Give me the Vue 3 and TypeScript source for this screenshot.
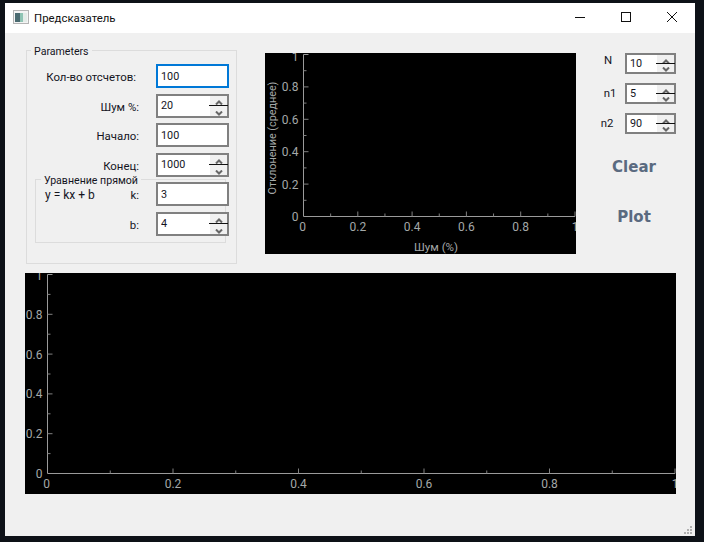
<script setup lang="ts">
interface Field { label: string; value: string; spin: boolean; focus?: boolean; indent?: number; dx?: number; dy?: number }
const params: Field[] = [
  { label: 'Кол-во отсчетов:', value: '100', spin: false, focus: true, indent: 3 },
  { label: 'Шум %:', value: '20', spin: true },
  { label: 'Начало:', value: '100', spin: false },
  { label: 'Конец:', value: '1000', spin: true },
  { label: 'k:', value: '3', spin: false },
  { label: 'b:', value: '4', spin: true },
]
const side: Field[] = [
  { label: 'N', value: '10', spin: true, dx: 0, dy: -2 },
  { label: 'n1', value: '5', spin: true, dx: 2, dy: 1 },
  { label: 'n2', value: '90', spin: true, dx: -1, dy: 1 },
]

interface Plot {
  w: number; h: number; x0: number; y0: number; x1: number; y1: number
  xTitle?: string; yTitle?: string; yTitleX?: number; yTitleY?: number; xTitleX?: number; xTitleY?: number
}
const small: Plot = { w: 311, h: 201, x0: 38.5, y0: 163.5, x1: 310, y1: 1.5, xTitle: 'Шум (%)', yTitle: 'Отклонение (среднее)', yTitleX: 7, yTitleY: 85, xTitleX: 171, xTitleY: 198 }
const large: Plot = { w: 651, h: 221, x0: 22.5, y0: 200.5, x1: 650, y1: 1.5 }

const fmt = (v: number) => (v === 0 ? '0' : v === 1 ? '1' : v.toFixed(1))
const steps = Array.from({ length: 11 }, (_, i) => i / 10)
const isMajor = (i: number) => i % 2 === 0
const px = (p: Plot, v: number) => p.x0 + (p.x1 - p.x0) * v
const py = (p: Plot, v: number) => p.y0 - (p.y0 - p.y1) * v
</script>

<template>
  <div class="desktop">
    <div class="window">
      <header class="titlebar">
        <svg class="appicon" width="16" height="14" viewBox="0 0 16 14">
          <rect x="0.5" y="0.5" width="15" height="13" fill="#f4f4f4" stroke="#b4b4b4" />
          <rect x="2" y="3" width="5" height="9" fill="#4a6a70" />
          <rect x="7" y="3" width="3" height="9" fill="#8fc4b4" />
          <rect x="10" y="3" width="4" height="9" fill="#e4ece8" />
        </svg>
        <span class="title">Предсказатель</span>
        <div class="controls">
          <span class="ctl"><svg width="12" height="12" viewBox="0 0 12 12"><path d="M1 6.5h10" stroke="#111" fill="none" /></svg></span>
          <span class="ctl"><svg width="12" height="12" viewBox="0 0 12 12"><rect x="1.5" y="1.5" width="9" height="9" stroke="#111" fill="none" /></svg></span>
          <span class="ctl"><svg width="12" height="12" viewBox="0 0 12 12"><path d="M1 1l10 10M11 1L1 11" stroke="#111" fill="none" /></svg></span>
        </div>
      </header>

      <main class="content">
        <section class="top">
          <div class="group">
            <span class="legend">Parameters</span>
            <div class="frame">
              <span class="legend inner">Уравнение прямой</span>
              <span class="equation">y = kx + b</span>
            </div>
            <div class="rows">
              <template v-for="f in params" :key="f.label">
                <label class="rowlabel" :style="f.indent ? { paddingRight: f.indent + 'px' } : undefined">{{ f.label }}</label>
                <div class="box" :class="{ focus: f.focus }">
                  <input class="val" :value="f.value" readonly />
                  <div v-if="f.spin" class="steps">
                    <svg class="chev" width="8" height="5" viewBox="0 0 8 5"><path d="M1 4.5L4 1.5l3 3" /></svg>
                    <svg class="chev" width="8" height="5" viewBox="0 0 8 5"><path d="M1 .5l3 3 3-3" /></svg>
                  </div>
                </div>
              </template>
            </div>
          </div>

          <svg class="plot plot-small" :width="small.w" :height="small.h">
            <path class="axis" :d="`M${small.x0} ${small.y0}H${small.x1}M${small.x0} ${small.y0}V${small.y1}H${small.x0 + 5}`" />
            <template v-for="(v, i) in steps" :key="i">
              <path v-if="i > 0" class="tick" :d="`M${px(small, v)} ${small.y0}v${isMajor(i) ? -5 : -3}`" />
              <path v-if="i > 0 && i < 10" class="tick" :d="`M${small.x0} ${py(small, v)}h${isMajor(i) ? 5 : 3}`" />
              <template v-if="isMajor(i)">
                <text class="lbl" :x="i === 0 ? small.x0 - 1 : px(small, v)" :y="small.y0 + 14" text-anchor="middle">{{ fmt(v) }}</text>
                <text class="lbl" :x="small.x0 - 5" :y="py(small, v) + (i === 10 ? 6 : 4.5)" text-anchor="end">{{ fmt(v) }}</text>
              </template>
            </template>
            <text class="lbl xtitle" :x="small.xTitleX" :y="small.xTitleY" text-anchor="middle">{{ small.xTitle }}</text>
            <text class="lbl ytitle" text-anchor="middle" :transform="`translate(${small.yTitleX} ${small.yTitleY}) rotate(-90)`" dy="4">{{ small.yTitle }}</text>
          </svg>

          <aside class="side">
            <div v-for="f in side" :key="f.label" class="siderow">
              <span class="sidelabel" :style="{ transform: `translate(${f.dx}px, ${f.dy}px)` }">{{ f.label }}</span>
              <div class="box small">
                <input class="val" :value="f.value" readonly />
                <div class="steps">
                  <svg class="chev" width="8" height="5" viewBox="0 0 8 5"><path d="M1 4.5L4 1.5l3 3" /></svg>
                  <svg class="chev" width="8" height="5" viewBox="0 0 8 5"><path d="M1 .5l3 3 3-3" /></svg>
                </div>
              </div>
            </div>
            <button class="action first" type="button">Clear</button>
            <button class="action second" type="button">Plot</button>
          </aside>
        </section>

        <svg class="plot plot-large" :width="large.w" :height="large.h">
          <path class="axis" :d="`M${large.x0} ${large.y0}H${large.x1}M${large.x0} ${large.y0}V${large.y1}H${large.x0 + 5}`" />
          <template v-for="(v, i) in steps" :key="i">
            <path v-if="i > 0" class="tick" :d="`M${px(large, v)} ${large.y0}v${isMajor(i) ? -5 : -3}`" />
            <path v-if="i > 0 && i < 10" class="tick" :d="`M${large.x0} ${py(large, v)}h${isMajor(i) ? 5 : 3}`" />
            <template v-if="isMajor(i)">
              <text class="lbl" :x="i === 0 ? large.x0 - 1 : px(large, v)" :y="large.y0 + 14" text-anchor="middle">{{ fmt(v) }}</text>
              <text class="lbl" :x="large.x0 - 5" :y="py(large, v) + (i === 10 ? 5 : 4.5)" text-anchor="end">{{ fmt(v) }}</text>
            </template>
          </template>
        </svg>
      </main>

      <svg class="grip" width="8" height="8" viewBox="0 0 8 8">
        <path d="M6 0h2v2H6zM3 3h2v2H3zM6 3h2v2H6zM0 6h2v2H0zM3 6h2v2H3zM6 6h2v2H6z" fill="#b0b0b0" />
      </svg>
    </div>
  </div>
</template>

<style>
html, body { margin: 0; background: #0d1117; }
</style>

<style scoped>
.desktop {
  width: 704px;
  height: 542px;
  box-sizing: border-box;
  padding: 3px 9px 6px 5px;
  background: #0d1117;
  overflow: hidden;
  font-family: Roboto, "Noto Sans", sans-serif;
  font-size: 11.4px;
  color: #14141e;
}
.window {
  position: relative;
  height: 100%;
  display: flex;
  flex-direction: column;
  background: #f0f0f0;
}
.titlebar {
  height: 30px;
  flex: none;
  display: flex;
  align-items: center;
  background: #fff;
  padding-left: 8px;
}
.appicon { margin-top: -2px; }
.title { margin-left: 5px; color: #111; }
.controls { margin-left: auto; display: flex; }
.ctl {
  width: 46px;
  height: 30px;
  padding-bottom: 3px;
  box-sizing: border-box;
  display: flex;
  align-items: center;
  justify-content: center;
}
.content { flex: 1; display: flex; flex-direction: column; }
.top {
  display: flex;
  align-items: flex-start;
  padding: 17px 19px 0 21px;
}
.group {
  position: relative;
  width: 211px;
  height: 214px;
  box-sizing: border-box;
  border: 1px solid #dcdcdc;
  flex: none;
}
.legend {
  position: absolute;
  left: 4px;
  top: -7px;
  padding: 0 3px;
  background: #f0f0f0;
  line-height: 16px;
  font-size: 10.6px;
}
.frame {
  position: absolute;
  left: 8px;
  top: 128px;
  width: 191px;
  height: 64px;
  box-sizing: border-box;
  border: 1px solid #dcdcdc;
}
.legend.inner { left: 5px; top: -7px; }
.equation {
  position: absolute;
  left: 9px;
  top: 7px;
  line-height: 16px;
  font-size: 12px;
}
.rows {
  position: relative;
  display: grid;
  grid-template-columns: 112px 73px;
  column-gap: 17px;
  row-gap: 5.6px;
  grid-auto-rows: 24px;
  padding-top: 13px;
}
.rowlabel { text-align: right; line-height: 26px; }
.box {
  position: relative;
  display: flex;
  box-sizing: border-box;
  border: 2px solid #808080;
  background: #fff;
}
.box.focus { border-color: #0078d7; }
.box.small { width: 51px; height: 21px; }
.val {
  flex: 1;
  min-width: 0;
  width: 0;
  border: 0;
  outline: 0;
  padding: 0 0 0 3px;
  margin: 0;
  background: transparent;
  font: inherit;
  font-size: 10.8px;
  color: #14141e;
}
.steps {
  position: relative;
  width: 17px;
  flex: none;
  display: flex;
  flex-direction: column;
  align-items: center;
  justify-content: space-between;
  padding: 4px 0 0;
  box-sizing: border-box;
  background: #f0f0f0;
}
.steps::after {
  content: "";
  position: absolute;
  left: -1px;
  right: -1px;
  top: calc(50% - 1px);
  height: 1px;
  background: #111;
}
.chev path { fill: none; stroke: #666; stroke-width: 2; }
.plot { display: block; background: #000; flex: none; overflow: hidden; }
.plot-small { margin: 3px 0 0 28px; }
.plot-large { margin: 9px 0 0 20px; }
.axis { fill: none; stroke: #9a9a9a; stroke-width: 1; }
.tick { fill: none; stroke: #808080; stroke-width: 1; }
.lbl { fill: #a4a8a8; font-size: 12px; }
.xtitle { font-size: 11.5px; }
.ytitle { font-size: 10.8px; }
.side {
  margin: 3px 0 0 auto;
  width: 82px;
  display: flex;
  flex-direction: column;
  gap: 9px;
}
.siderow { display: flex; align-items: center; }
.sidelabel { width: 22px; margin: -3px 6px 0 3px; text-align: center; }
.action {
  width: 80px;
  height: 40px;
  padding: 0;
  border: 0;
  background: transparent;
  font-family: "DejaVu Sans", sans-serif;
  font-weight: 700;
  font-size: 15px;
  color: #5a6a80;
}
.action.first { margin-top: 4px; }
.action.second { margin-top: 1px; }
.grip { position: absolute; right: 3px; bottom: 2px; }
</style>
